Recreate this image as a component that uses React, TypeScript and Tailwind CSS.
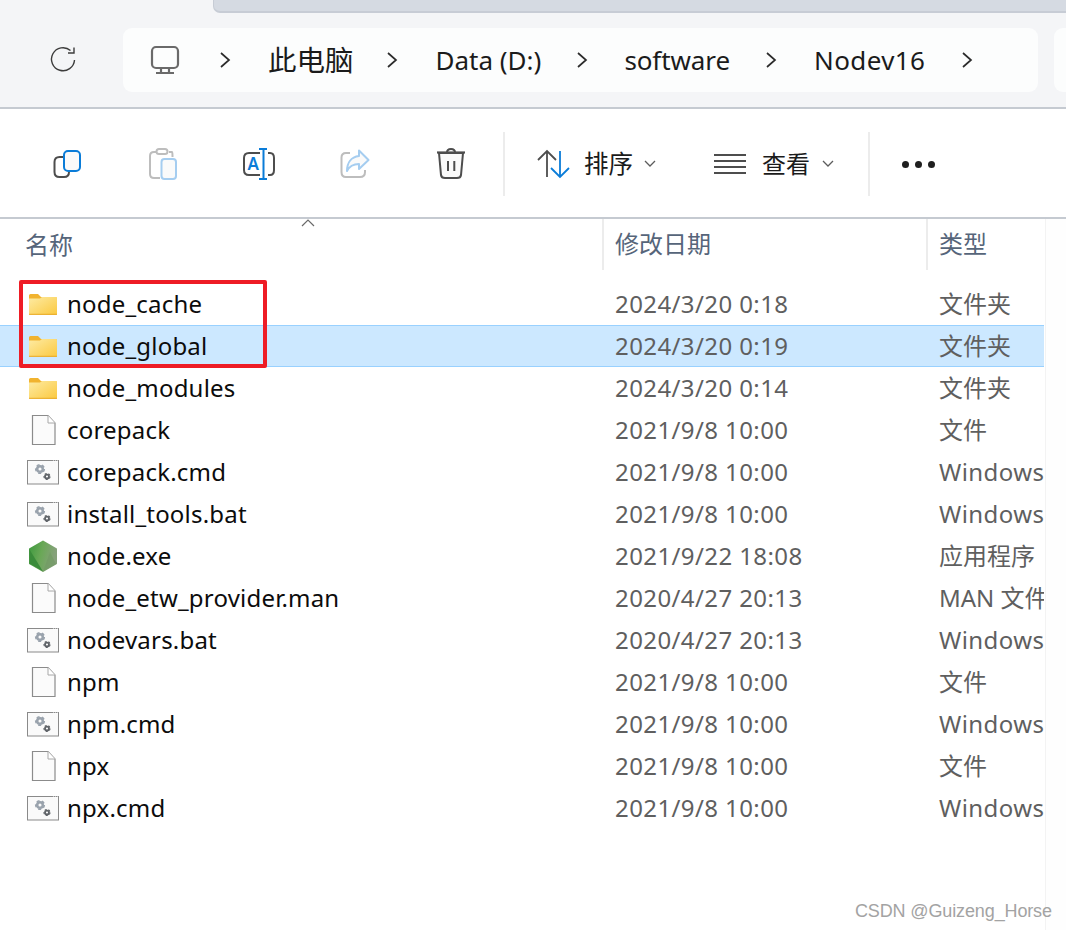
import type { ReactNode } from "react";

const UI_FONT = "font-['Noto_Sans','Noto_Sans_CJK_SC',sans-serif]";

type Kind = "folder" | "file" | "cmd" | "node";

interface Row {
  name: string;
  date: string;
  type: string;
  kind: Kind;
  selected?: boolean;
}

const rows: Row[] = [
  { name: "node_cache", date: "2024/3/20 0:18", type: "文件夹", kind: "folder" },
  { name: "node_global", date: "2024/3/20 0:19", type: "文件夹", kind: "folder", selected: true },
  { name: "node_modules", date: "2024/3/20 0:14", type: "文件夹", kind: "folder" },
  { name: "corepack", date: "2021/9/8 10:00", type: "文件", kind: "file" },
  { name: "corepack.cmd", date: "2021/9/8 10:00", type: "Windows", kind: "cmd" },
  { name: "install_tools.bat", date: "2021/9/8 10:00", type: "Windows", kind: "cmd" },
  { name: "node.exe", date: "2021/9/22 18:08", type: "应用程序", kind: "node" },
  { name: "node_etw_provider.man", date: "2020/4/27 20:13", type: "MAN 文件", kind: "file" },
  { name: "nodevars.bat", date: "2020/4/27 20:13", type: "Windows", kind: "cmd" },
  { name: "npm", date: "2021/9/8 10:00", type: "文件", kind: "file" },
  { name: "npm.cmd", date: "2021/9/8 10:00", type: "Windows", kind: "cmd" },
  { name: "npx", date: "2021/9/8 10:00", type: "文件", kind: "file" },
  { name: "npx.cmd", date: "2021/9/8 10:00", type: "Windows", kind: "cmd" },
];

function Chevron() {
  return (
    <svg width="12" height="18" viewBox="0 0 12 18" fill="none" className="shrink-0">
      <path d="M2 2l8 7-8 7" stroke="#2b2b2b" strokeWidth="1.7" />
    </svg>
  );
}

function FolderIcon() {
  return (
    <svg width="30" height="24" viewBox="0 0 30 24">
      <defs>
        <linearGradient id="fold" x1="0" y1="0" x2="1" y2="1">
          <stop offset="0" stopColor="#fdeba4" />
          <stop offset="1" stopColor="#fbc93f" />
        </linearGradient>
      </defs>
      <path d="M1 3.5A1.5 1.5 0 0 1 2.5 2H10l3 3h15.5v4H1z" fill="#f1b32f" />
      <path d="M1 6.5h11l2-1.500h14a1 1 0 0 1 1 1V22a1 1 0 0 1-1 1H2a1 1 0 0 1-1-1z" fill="url(#fold)" />
      <path d="M1 22.300h28" stroke="#e8ab2b" strokeWidth="1" />
    </svg>
  );
}

function FileIcon() {
  return (
    <svg width="30" height="32" viewBox="0 0 30 32">
      <path d="M4.500 1.500H20l7 7.500v21.500H4.500z" fill="#fbfbfb" stroke="#8b8b8b" strokeWidth="1.200" />
      <path d="M20 1.500V9h7" fill="#fff" stroke="#a8a8a8" strokeWidth="1" />
    </svg>
  );
}

function Gear({ x, y, r, color }: { x: number; y: number; r: number; color: string }) {
  return (
    <g>
      <circle cx={x} cy={y} r={r * 0.62} fill="none" stroke={color} strokeWidth={r * 0.55} />
      <circle
        cx={x}
        cy={y}
        r={r * 0.95}
        fill="none"
        stroke={color}
        strokeWidth={r * 0.35}
        strokeDasharray={`${r * 0.65} ${r * 0.55}`}
      />
    </g>
  );
}

function CmdIcon() {
  return (
    <svg width="32" height="25" viewBox="0 0 32 25">
      <rect x="0.500" y="0.500" width="31" height="23.500" fill="#fafafa" stroke="#8a8a8a" strokeWidth="1" />
      <path d="M26 1h5" stroke="#ffffff" strokeWidth="1" strokeDasharray="1 1" />
      <Gear x={13} y={9} r={4.500} color="#9aa3ad" />
      <Gear x={20} y={16.500} r={3.200} color="#5f6368" />
    </svg>
  );
}

function NodeIcon() {
  return (
    <svg width="30" height="32" viewBox="0 0 30 32">
      <defs>
        <linearGradient id="nodeg" x1="0" y1="0" x2="1" y2="0.300">
          <stop offset="0" stopColor="#3f9a3f" />
          <stop offset="0.500" stopColor="#6aa857" />
          <stop offset="1" stopColor="#86a17a" />
        </linearGradient>
      </defs>
      <path d="M15 1.500l13 7.500v14.500l-13 7.500-13-7.500V9z" fill="url(#nodeg)" stroke="url(#nodeg)" strokeWidth="2" strokeLinejoin="round" />
      <path d="M1.500 9.500L15 31.500 1.500 23.500z" fill="#3a8b3a" />
      <path d="M15 31.500L22 12 28 24z" fill="#6f9a62" opacity="0.600" />
    </svg>
  );
}

function RowIcon({ kind }: { kind: Kind }) {
  if (kind === "folder") return <FolderIcon />;
  if (kind === "file") return <FileIcon />;
  if (kind === "cmd") return <CmdIcon />;
  return <NodeIcon />;
}

function ToolSlot({ children }: { children: ReactNode }) {
  return <div className="flex h-[64px] w-[96px] items-center justify-center">{children}</div>;
}

function SmallCaret() {
  return (
    <svg width="12" height="8" viewBox="0 0 12 8" fill="none">
      <path d="M1 1l5 5 5-5" stroke="#5c5c5c" strokeWidth="1.300" />
    </svg>
  );
}

function Separator() {
  return <div className="h-[64px] w-[2px] bg-[#ececec]" />;
}

export default function App() {
  return (
    <div className={`relative h-[930px] w-[1066px] overflow-hidden bg-white ${UI_FONT}`}>
      {/* bit of the tab strip above the address bar */}
      <div className="absolute left-[213px] top-0 h-[13px] w-[853px] rounded-bl-[7px] border-b-2 border-l border-[#c7ccd5] bg-[#d5dae2]" />

      <header className="flex h-[109px] items-start border-b-2 border-[#c5cad1] bg-[#f4f5f7] pt-[28px]">
        <div className="flex h-[64px] w-[123px] items-center justify-center pl-[2px]">
          <svg width="28" height="28" viewBox="0 0 28 28" fill="none">
            <path d="M21.500 4.500A11.500 11.500 0 1 0 25.500 14" stroke="#3c3c3c" strokeWidth="1.400" />
            <path d="M25 1.500v5.500h-6" stroke="#3c3c3c" strokeWidth="1.400" />
          </svg>
        </div>
        <div className="flex h-[64px] w-[915px] items-center rounded-[9px] bg-[#fcfdfd] text-[#1b1b1b]">
          <svg width="30" height="30" viewBox="0 0 30 30" fill="none" className="ml-[27px] shrink-0">
            <rect x="2" y="2" width="26" height="21" rx="4" stroke="#6a6a6a" strokeWidth="2.200" />
            <path d="M11 23v5M19 23v5M6 28h18" stroke="#6a6a6a" strokeWidth="2.200" />
          </svg>
          <div className="ml-[39px]"><Chevron /></div>
          <span className="ml-[37px] text-[28.500px] leading-none">此电脑</span>
          <div className="ml-[32px]"><Chevron /></div>
          <span className="ml-[38px] text-[26px] leading-none">Data (D:)</span>
          <div className="ml-[35px]"><Chevron /></div>
          <span className="ml-[36px] text-[26px] leading-none tracking-[-0.1px]">software</span>
          <div className="ml-[35px]"><Chevron /></div>
          <span className="ml-[37px] text-[26px] leading-none tracking-[0.4px]">Nodev16</span>
          <div className="ml-[36px]"><Chevron /></div>
        </div>
        <div className="ml-[16px] h-[64px] w-[12px] rounded-l-[9px] bg-[#fcfdfd]" />
      </header>

      <div className="flex h-[110px] items-center border-b-2 border-[#c5cad1] bg-white pl-[19px] pt-[2px]">
        <ToolSlot>
          <svg width="28" height="28" viewBox="0 0 28 28" fill="none">
            <path d="M10 7H6.500Q1.500 7 1.500 12V22Q1.500 27 6.500 27H11Q16 27 16 22" stroke="#4d4d4d" strokeWidth="2" />
            <rect x="11" y="1" width="16" height="20" rx="4" fill="#fafafa" stroke="#0a7cd8" strokeWidth="2" />
          </svg>
        </ToolSlot>
        <ToolSlot>
          <svg width="28" height="32" viewBox="0 0 28 32" fill="none">
            <path d="M8 4H5Q1 4 1 8V26Q1 30 5 30H11M20 4H23Q23.500 4 23.500 8V9" stroke="#bdbdbd" strokeWidth="2" />
            <rect x="7.500" y="1" width="11" height="5" rx="2.500" stroke="#bdbdbd" strokeWidth="2" />
            <rect x="12.500" y="11" width="14.500" height="20" rx="3" fill="#fafafa" stroke="#a5cdf0" strokeWidth="2" />
          </svg>
        </ToolSlot>
        <ToolSlot>
          <svg width="32" height="32" viewBox="0 0 32 32" fill="none">
            <path d="M17 5H6Q1 5 1 10V22Q1 27 6 27H17M25 5H27Q31 5 31 10V22Q31 27 27 27H25" stroke="#4d4d4d" strokeWidth="2" />
            <path d="M16 1h8M16 31h8M20.500 1v30" stroke="#0a7cd8" strokeWidth="2" />
            <text x="4.500" y="22" fontSize="17" fontWeight="600" fill="#0a7cd8">A</text>
          </svg>
        </ToolSlot>
        <ToolSlot>
          <svg width="30" height="30" viewBox="0 0 30 30" fill="none">
            <path d="M10 4H6Q1.500 4 1.500 8.500V23Q1.500 28 6 28H20Q25 28 25 23V21" stroke="#bdbdbd" strokeWidth="2" />
            <path d="M19 1.500L28.500 11 19 20V15C14 15 9.500 17 7 22 7 14 11 8 19 7z" fill="#fafafa" stroke="#a5cdf0" strokeWidth="2" strokeLinejoin="round" />
          </svg>
        </ToolSlot>
        <ToolSlot>
          <svg width="30" height="32" viewBox="0 0 30 32" fill="none">
            <path d="M1 4.500h28" stroke="#4d4d4d" strokeWidth="2.200" />
            <path d="M11 4.500Q11 1 15 1Q19 1 19 4.500" stroke="#4d4d4d" strokeWidth="2" />
            <path d="M3 5l2 22Q5.500 30 9 30H21Q24.500 30 25 27L27 5z" fill="#fafafa" stroke="#4d4d4d" strokeWidth="2" />
            <path d="M12 13v10M18.300 13v10" stroke="#4d4d4d" strokeWidth="2" />
          </svg>
        </ToolSlot>
        <div className="ml-[4px]"><Separator /></div>
        <div className="ml-[32px] flex items-center">
          <svg width="34" height="30" viewBox="0 0 34 30" fill="none">
            <path d="M10 28V2M1 11l9-9 9 9" stroke="#4d4d4d" strokeWidth="1.800" />
            <path d="M23 2v26M14 19l9 9 9-9" stroke="#0a7cd8" strokeWidth="1.800" />
          </svg>
          <span className="ml-[13px] text-[24.500px] leading-none text-[#1b1b1b]">排序</span>
          <span className="ml-[11px] flex"><SmallCaret /></span>
        </div>
        <div className="ml-[58px] flex items-center">
          <svg width="32" height="22" viewBox="0 0 32 22" fill="none">
            <path d="M0 2h32M0 8h32M0 14h32M0 20h32" stroke="#4d4d4d" strokeWidth="1.800" />
          </svg>
          <span className="ml-[16px] text-[24px] leading-none text-[#1b1b1b]">查看</span>
          <span className="ml-[12px] flex"><SmallCaret /></span>
        </div>
        <div className="ml-[34px]"><Separator /></div>
        <div className="ml-[32px] flex gap-[6px]">
          <span className="h-[7px] w-[7px] rounded-full bg-[#1f1f1f]" />
          <span className="h-[7px] w-[7px] rounded-full bg-[#1f1f1f]" />
          <span className="h-[7px] w-[7px] rounded-full bg-[#1f1f1f]" />
        </div>
      </div>

      <div className="flex">
        <main className="w-[1044px] overflow-hidden">
          <div className="flex h-[51px] items-center text-[24px] leading-none text-[#56657a]">
            <div className="w-[602px] pl-[25px]">名称</div>
            <div className="h-full w-[324px] border-l-2 border-[#ececec] pl-[11px] pt-[13px]">修改日期</div>
            <div className="h-full flex-1 border-l-2 border-[#ececec] pl-[11px] pt-[13px]">类型</div>
          </div>
          <div className="mt-[13px]">
            {rows.map((row) => (
              <div
                key={row.name}
                className={`flex h-[42px] items-center whitespace-nowrap border-y text-[24px] ${
                  row.selected ? "border-[#99d1ff] bg-[#cce8ff]" : "border-transparent"
                }`}
              >
                <div className="flex w-[603px] items-center">
                  <div className="flex w-[67px] justify-center pl-[18px]">
                    <RowIcon kind={row.kind} />
                  </div>
                  <span className="tracking-[0.2px] text-[#0c0c0c]">{row.name}</span>
                </div>
                <div className="w-[323px] pl-[12px] tracking-[0.4px] text-[#5f5f5f]">{row.date}</div>
                <div
                  className={`flex-1 overflow-hidden pl-[13px] text-[#5f5f5f] ${
                    row.type === "Windows" ? "tracking-[0.4px]" : ""
                  }`}
                >
                  {row.type}
                </div>
              </div>
            ))}
          </div>
        </main>
        <div className="ml-px h-[711px] flex-1 border-l border-[#f3f3f3] bg-[#fefefe]" />
      </div>

      {/* sort caret on the column header */}
      <svg width="14" height="8" viewBox="0 0 14 8" fill="none" className="absolute left-[301px] top-[219px]">
        <path d="M1 7l6-6 6 6" stroke="#6a6a6a" strokeWidth="1.200" />
      </svg>

      {/* red annotation box */}
      <div className="absolute left-[19px] top-[280px] h-[88px] w-[248px] rounded-[2px] border-[4px] border-[#ee1c25]" />

      <div className="absolute left-[855px] top-[899px] font-['Liberation_Sans',sans-serif] text-[18px] leading-[24px] tracking-[-0.13px] text-[#a3a3a3]">
        CSDN @Guizeng_Horse
      </div>
    </div>
  );
}
